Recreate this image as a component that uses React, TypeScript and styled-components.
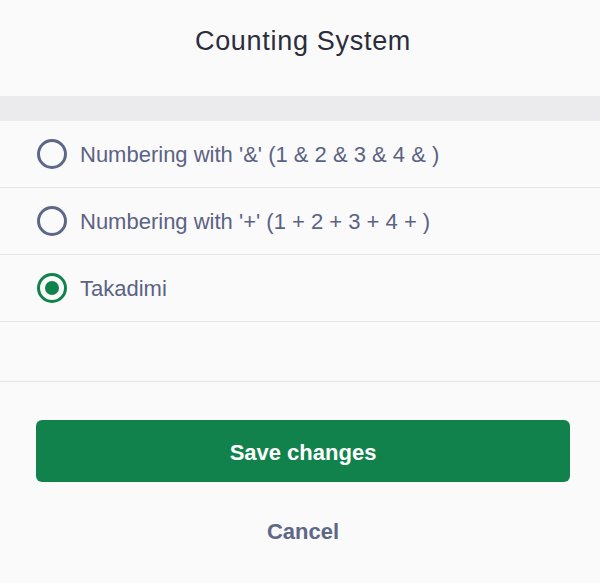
import { useState } from 'react';
import styled, { createGlobalStyle } from 'styled-components';

const GlobalStyle = createGlobalStyle`
  html, body {
    margin: 0;
    padding: 0;
    background: #fafafa;
  }
  body {
    font-family: "Liberation Sans", Arial, sans-serif;
  }
`;

const Sheet = styled.div`
  width: 600px;
  height: 583px;
  background: #fafafa;
  display: flex;
  flex-direction: column;
`;

const Header = styled.header`
  height: 96px;
  display: flex;
  align-items: flex-start;
  justify-content: center;
  padding: 24px 0 0 6px;
  box-sizing: border-box;
`;

const Title = styled.h1`
  margin: 0;
  font-size: 27px;
  font-weight: 400;
  letter-spacing: 0.7px;
  color: #2b2d3c;
  line-height: 34px;
`;

const Band = styled.div`
  height: 25px;
  background: #ebebed;
`;

const OptionList = styled.div`
  display: flex;
  flex-direction: column;
`;

const Option = styled.label`
  height: 66px;
  display: flex;
  align-items: center;
  gap: 13px;
  padding-left: 37px;
  border-bottom: 1px solid #e6e6e8;
  cursor: pointer;
`;

const Radio = styled.span<{ $checked: boolean }>`
  width: 30px;
  height: 30px;
  box-sizing: border-box;
  border-radius: 50%;
  border: 3px solid ${(p) => (p.$checked ? '#12824d' : '#5d6787')};
  display: flex;
  align-items: center;
  justify-content: center;

  &::after {
    content: '';
    width: 14px;
    height: 14px;
    border-radius: 50%;
    background: #12824d;
    display: ${(p) => (p.$checked ? 'block' : 'none')};
  }
`;

const OptionText = styled.span`
  font-size: 22px;
  line-height: 26px;
  padding-top: 2px;
  color: #5a6384;
`;

const Spacer = styled.div`
  height: 59px;
  border-bottom: 1px solid #e6e6e8;
`;

const Actions = styled.div`
  display: flex;
  flex-direction: column;
  align-items: center;
  padding: 38px 30px 0 36px;
`;

const SaveButton = styled.button`
  width: 534px;
  height: 62px;
  padding: 4px 0 0;
  border: none;
  border-radius: 6px;
  background: #12824d;
  color: #ffffff;
  font-family: inherit;
  font-size: 22px;
  font-weight: 700;
  cursor: pointer;
`;

const CancelButton = styled.button`
  margin-top: 36px;
  padding: 0;
  border: none;
  background: none;
  font-family: inherit;
  font-size: 22px;
  line-height: 28px;
  font-weight: 700;
  color: #5d6787;
  cursor: pointer;
`;

const options = [
  "Numbering with '&' (1 & 2 & 3 & 4 & )",
  "Numbering with '+' (1 + 2 + 3 + 4 + )",
  'Takadimi',
];

export default function App() {
  const [selected, setSelected] = useState(2);

  return (
    <>
      <GlobalStyle />
      <Sheet>
        <Header>
          <Title>Counting System</Title>
        </Header>
        <Band />
        <OptionList>
          {options.map((label, i) => (
            <Option key={label} onClick={() => setSelected(i)}>
              <Radio $checked={selected === i} />
              <OptionText>{label}</OptionText>
            </Option>
          ))}
        </OptionList>
        <Spacer />
        <Actions>
          <SaveButton>Save changes</SaveButton>
          <CancelButton>Cancel</CancelButton>
        </Actions>
      </Sheet>
    </>
  );
}
